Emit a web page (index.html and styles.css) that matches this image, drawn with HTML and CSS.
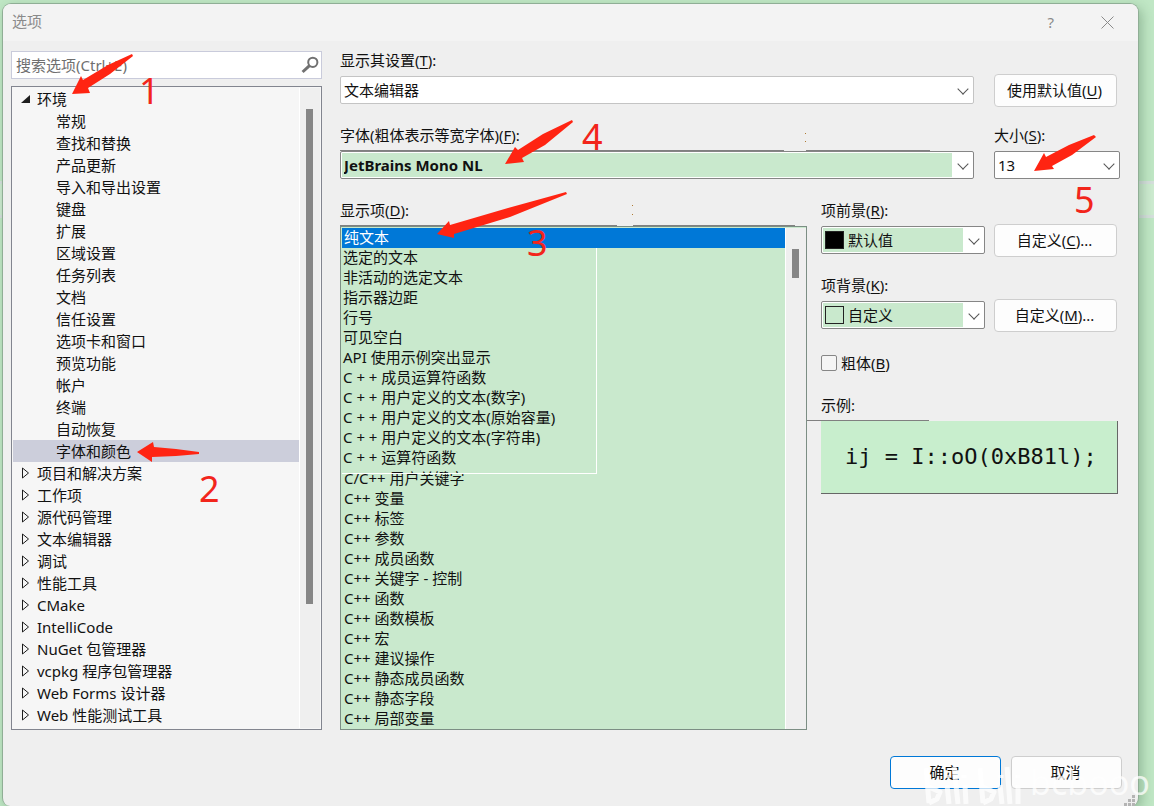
FILE: index.html
```html
<!DOCTYPE html>
<html lang="zh-CN">
<head>
<meta charset="UTF-8">
<meta name="viewport" content="width=device-width, initial-scale=1.0">
<title>选项</title>
<link rel="stylesheet" href="styles.css">
</head>
<body>
<div class="dialog">
  <header class="titlebar">
    <h1>选项</h1>
    <div class="window-buttons">
      <button type="button" aria-label="帮助">?</button>
      <button type="button" aria-label="关闭"><svg width="13" height="13" viewBox="0 0 13 13"><path d="M.5 .5L12.5 12.5M12.5 .5L.5 12.5"/></svg></button>
    </div>
  </header>

  <main class="content">
    <aside class="sidebar">
      <div class="search">
        <input type="text" placeholder="搜索选项(Ctrl+E)" aria-label="搜索选项">
        <svg width="18" height="18" viewBox="0 0 18 18"><circle cx="11.8" cy="6.3" r="4.6"/><path d="M8.5 9.6L1.6 16" stroke-width="3"/></svg>
      </div>
      <div class="tree-box">
        <ul class="tree" id="tree"></ul>
        <div class="scroll"><div class="thumb"></div></div>
      </div>
    </aside>

    <section class="settings">
      <div class="row">
        <div class="field grow">
          <label for="show">显示其设置(<u>T</u>):</label>
          <div class="combo"><select id="show"><option>文本编辑器</option></select></div>
        </div>
        <div class="field side"><button type="button" class="btn">使用默认值(<u>U</u>)</button></div>
      </div>

      <div class="row">
        <div class="field grow">
          <label for="font">字体(粗体表示等宽字体)(<u>F</u>):</label>
          <div class="combo tinted dark"><select id="font" class="bold"><option>JetBrains Mono NL</option></select></div>
        </div>
        <div class="field side">
          <label for="size">大小(<u>S</u>):</label>
          <div class="combo dark"><select id="size"><option>13</option></select></div>
        </div>
      </div>

      <div class="row lower">
        <div class="field grow">
          <label id="itemsLabel">显示项(<u>D</u>):</label>
          <div class="list-box">
            <ul class="items" role="listbox" aria-labelledby="itemsLabel">
              <li class="selected" role="option" aria-selected="true">纯文本</li>
            </ul>
            <div class="scroll"><div class="thumb"></div></div>
          </div>
        </div>

        <div class="colors">
          <div class="row pair">
            <div class="field grow">
              <label for="fg">项前景(<u>R</u>):</label>
              <div class="combo tinted dark"><span class="swatch black"></span><select id="fg"><option>默认值</option></select></div>
            </div>
            <div class="field side"><button type="button" class="btn">自定义(<u>C</u>)...</button></div>
          </div>
          <div class="row pair">
            <div class="field grow">
              <label for="bg">项背景(<u>K</u>):</label>
              <div class="combo tinted dark"><span class="swatch"></span><select id="bg"><option>自定义</option></select></div>
            </div>
            <div class="field side"><button type="button" class="btn">自定义(<u>M</u>)...</button></div>
          </div>
          <label class="check"><input type="checkbox"><span>粗体(<u>B</u>)</span></label>
          <div class="sample-label">示例:</div>
          <div class="sample">ij = I::oO(0xB81l);</div>
        </div>
      </div>
    </section>
  </main>

  <footer class="actions">
    <button type="button" class="btn primary">确定</button>
    <button type="button" class="btn">取消</button>
  </footer>
</div>

<svg class="marks" width="1154" height="806" viewBox="0 0 1154 806">
  <g class="edges">
    <path d="M340 150.5H784M806 150.5H930M340 225.5H617M633 225.5H795M807 420.5H929"/>
  </g>
  <g class="dots">
    <rect x="805" y="133" width="1" height="1"/><rect x="805" y="141" width="1" height="1"/>
    <rect x="632" y="205" width="1" height="1"/><rect x="632" y="214" width="1" height="1"/>
  </g>
  <g class="arrows">
    <path d="M132 54L133 56L110 74L88 88L90 93L72 94L81 76L83 80L108 65Z"/>
    <path d="M199 452V454L176 456L152 457L152 462L137 452L153 442L154 447L176 449Z"/>
    <path d="M566 192L567 194L510 217L454 234L454 238L437 234L449 221L450 225L508 208Z"/>
    <path d="M572 120L573 122L545 145L522 158L524 162L505 164L515 147L518 150L543 134Z"/>
    <path d="M1094 135L1096 137L1072 155L1052 166L1054 169L1034 171L1044 153L1046 157L1069 145Z"/>
  </g>
  <g class="numbers">
    <text x="139" y="104">1</text>
    <text x="199" y="502">2</text>
    <text x="527" y="256">3</text>
    <text x="582" y="150">4</text>
    <text x="1074" y="213">5</text>
  </g>
  <g class="grip">
    <path d="M1132 795h3v3h-3zM1128 799h3v3h-3zM1132 799h3v3h-3zM1124 803h3v3h-3zM1128 803h3v3h-3zM1132 803h3v3h-3z"/>
  </g>
  <g class="watermark">
    <path class="logo" d="M926 768L929 803M929 787L940 792L937 799L929 803M947 785L949 804M954 767L958 804M965 785L966 804M948 775v3M964 775v3M980 768L983 803M983 787L994 792L991 799L983 803M1000 785L1002 804M1007 767L1010 804M1018 785L1018 804M1001 775v3M1018 775v3"/>
    <text x="1030" y="795">bcbooo</text>
  </g>
</svg>

<script>
const tree = [
  { name: '环境', open: true, children: ['常规', '查找和替换', '产品更新', '导入和导出设置', '键盘', '扩展', '区域设置', '任务列表', '文档', '信任设置', '选项卡和窗口', '预览功能', '帐户', '终端', '自动恢复', '字体和颜色'] },
  { name: '项目和解决方案' }, { name: '工作项' }, { name: '源代码管理' }, { name: '文本编辑器' },
  { name: '调试' }, { name: '性能工具' }, { name: 'CMake' }, { name: 'IntelliCode' },
  { name: 'NuGet 包管理器' }, { name: 'vcpkg 程序包管理器' }, { name: 'Web Forms 设计器' }, { name: 'Web 性能测试工具' }
];
const translated = ['选定的文本', '非活动的选定文本', '指示器边距', '行号', '可见空白', 'API 使用示例突出显示', 'C + + 成员运算符函数', 'C + + 用户定义的文本(数字)', 'C + + 用户定义的文本(原始容量)', 'C + + 用户定义的文本(字符串)', 'C + + 运算符函数'];
const items = ['C/C++ 用户关键字', 'C++ 变量', 'C++ 标签', 'C++ 参数', 'C++ 成员函数', 'C++ 关键字 - 控制', 'C++ 函数', 'C++ 函数模板', 'C++ 宏', 'C++ 建议操作', 'C++ 静态成员函数', 'C++ 静态字段', 'C++ 局部变量'];

const closedIcon = '<svg width="9" height="12" viewBox="0 0 9 12"><path class="closed" d="M1.5 1L7.5 6L1.5 11Z"/></svg>';
const openIcon = '<svg width="9" height="12" viewBox="0 0 9 12"><path class="open" d="M9 2V10H0Z"/></svg>';

document.getElementById('tree').innerHTML = tree.map(n => {
  const kids = (n.children || []).map(c => `<li class="child${c === '字体和颜色' ? ' current' : ''}">${c}</li>`).join('');
  return `<li class="parent">${n.open ? openIcon : closedIcon}${n.name}</li>${kids}`;
}).join('');

const option = t => `<li role="option">${t}</li>`;
document.querySelector('.items').innerHTML +=
  `<li class="framed" role="presentation"><ul role="group">${translated.map(option).join('')}</ul></li>` + items.map(option).join('');
</script>
</body>
</html>
```
FILE: styles.css
```css
* { box-sizing: border-box; }
body { margin: 0; padding: 3px 15px 0 2px; min-height: 100vh; display: flex; background: linear-gradient(#d5dfdc 0 3px, #cdebd0 3px 34px, #d5dfdc 34px 37px) 0 181px / 100% 37px no-repeat #c0e7c5; font: 15px/20px "Noto Sans", "Noto Sans CJK SC", sans-serif; color: #111; overflow: hidden; position: relative; }
ul { list-style: none; margin: 0; padding: 0; }
button, input, select { font: inherit; color: inherit; margin: 0; }
u { text-underline-offset: 2px; }

.dialog { flex: 1; display: flex; flex-direction: column; background: #efefef; border: 1px solid #8fae95; border-bottom: 0; border-radius: 9px 9px 8px 8px; overflow: hidden; box-shadow: 3px 4px 12px rgba(40, 80, 50, .3); }
.titlebar { display: flex; justify-content: space-between; height: 37px; padding: 0 24px 0 9px; background: #f3f3f3; color: #8a8a8a; }
.titlebar h1 { margin: 0; font-size: 15px; font-weight: normal; line-height: 34px; }
.window-buttons { display: flex; gap: 47px; align-items: flex-start; }
.window-buttons button { border: 0; padding: 0; background: none; line-height: 36px; }
.window-buttons svg { display: block; margin-top: 12px; fill: none; stroke: #8a8a8a; }

.content { display: flex; gap: 18px; padding: 10px 18px 0 8px; }
.sidebar { width: 311px; flex: none; display: flex; flex-direction: column; gap: 7px; }
.search { display: flex; align-items: center; height: 28px; padding: 0 2px 0 4px; background: #fff; border: 1px solid #c9cbdb; }
.search input { flex: 1; min-width: 0; border: 0; padding: 0; outline: 0; background: none; }
.search input::placeholder { color: #6f6f6f; }
.search svg { fill: none; stroke: #717171; stroke-width: 2; }
.tree-box { display: flex; height: 644px; border: 1px solid #82858f; background: #f6f6f6; padding: 1px; }
.tree { flex: 1; }
.tree li { height: 22px; line-height: 22px; white-space: nowrap; }
.tree .parent { display: flex; align-items: center; gap: 7px; padding-left: 8px; }
.tree .child { padding-left: 43px; }
.tree .current { background: #cccedb; }
.tree .closed { fill: none; stroke: #1e1e1e; }
.tree .open { fill: #1e1e1e; }
.scroll { width: 21px; flex: none; background: #efefef; border-left: 1px solid #fff; padding: 21px 7px 0 6px; }
.thumb { height: 495px; background: #868686; }

.settings { flex: 1; min-width: 0; display: flex; flex-direction: column; gap: 22px; }
.row { display: flex; gap: 20px; align-items: flex-end; }
.field { display: flex; flex-direction: column; gap: 6px; }
.field label { line-height: 19px; }
.grow { flex: 1; min-width: 0; }
.side { width: 126px; }
.combo { display: flex; align-items: center; height: 28px; padding: 2px; background: #fff; border: 1px solid #c4c4c4; border-radius: 2px; position: relative; }
.combo::after { content: ""; position: absolute; right: 6px; top: 8px; width: 7px; height: 7px; border: solid #555; border-width: 0 1px 1px 0; transform: rotate(45deg); pointer-events: none; }
.combo select { flex: 1; height: 22px; border: 0; padding: 0 0 0 1px; appearance: none; background: none; outline: 0; }
.combo .bold { font-weight: bold; }
.dark { border-color: #868686; }
.tinted { background: linear-gradient(#c9e9cd, #c9e9cd) 1px 1px / calc(100% - 22px) calc(100% - 2px) no-repeat #fff; }
.swatch { width: 19px; height: 18px; margin: 0 3px 0 1px; border: 1px solid #222; }
.black { background: #000; }
.btn { width: 123px; height: 33px; margin-bottom: -3px; padding: 0 2px 2px 0; background: #fdfdfd; border: 1px solid #cecece; border-radius: 4px; }

.lower { align-items: flex-start; gap: 14px; }
.list-box { display: flex; height: 504px; border: 1px solid #7c8e84; background: #c9e9cd; padding: 1px 0 0 1px; }
.items { flex: 1; line-height: 19px; }
.items li { height: 20px; padding-left: 2px; white-space: nowrap; }
.items .selected { background: #0078d7; color: #fff; }
.items .framed { position: relative; height: 220px; margin-bottom: 1px; padding: 0; }
.framed::after { content: ""; position: absolute; top: 0; left: 0; width: 254px; height: 225px; border: solid #fff; border-width: 0 1px 1px 0; }
.framed li { padding-left: 1px; }
.list-box .thumb { height: 29px; }

.colors { width: 299px; }
.pair { gap: 9px; margin-bottom: 22px; }
.check { display: flex; align-items: center; gap: 4px; margin-top: 24px; }
.check input { appearance: none; width: 16px; height: 16px; border: 1px solid #868686; border-radius: 2px; background: #f5f5f5; }
.sample-label { margin-top: 22px; }
.sample { height: 73px; margin: 6px 2px 0 0; padding-left: 24px; background: #c8eecd; border: solid #666; border-width: 0 1px 1px 0; font: 22px/72px "DejaVu Sans Mono", monospace; white-space: nowrap; }

.actions { display: flex; justify-content: flex-end; gap: 10px; padding: 26px 16px 16px; }
.actions .btn { width: 111px; margin: 0; }
.actions .primary { border-color: #0078d7; }

/* annotations drawn over the dialog */
.marks { position: absolute; left: 0; top: 0; pointer-events: none; }
.edges { stroke: #808080; fill: none; }
.dots { fill: #b07a30; }
.arrows { fill: #ff2412; }
.numbers { fill: #f2251b; font-size: 36px; }
.grip { fill: #b4b4b4; }
.watermark { fill: #fff; opacity: .75; font-size: 34px; }
.logo { fill: none; stroke: #fff; stroke-width: 5; stroke-linejoin: round; }
```
